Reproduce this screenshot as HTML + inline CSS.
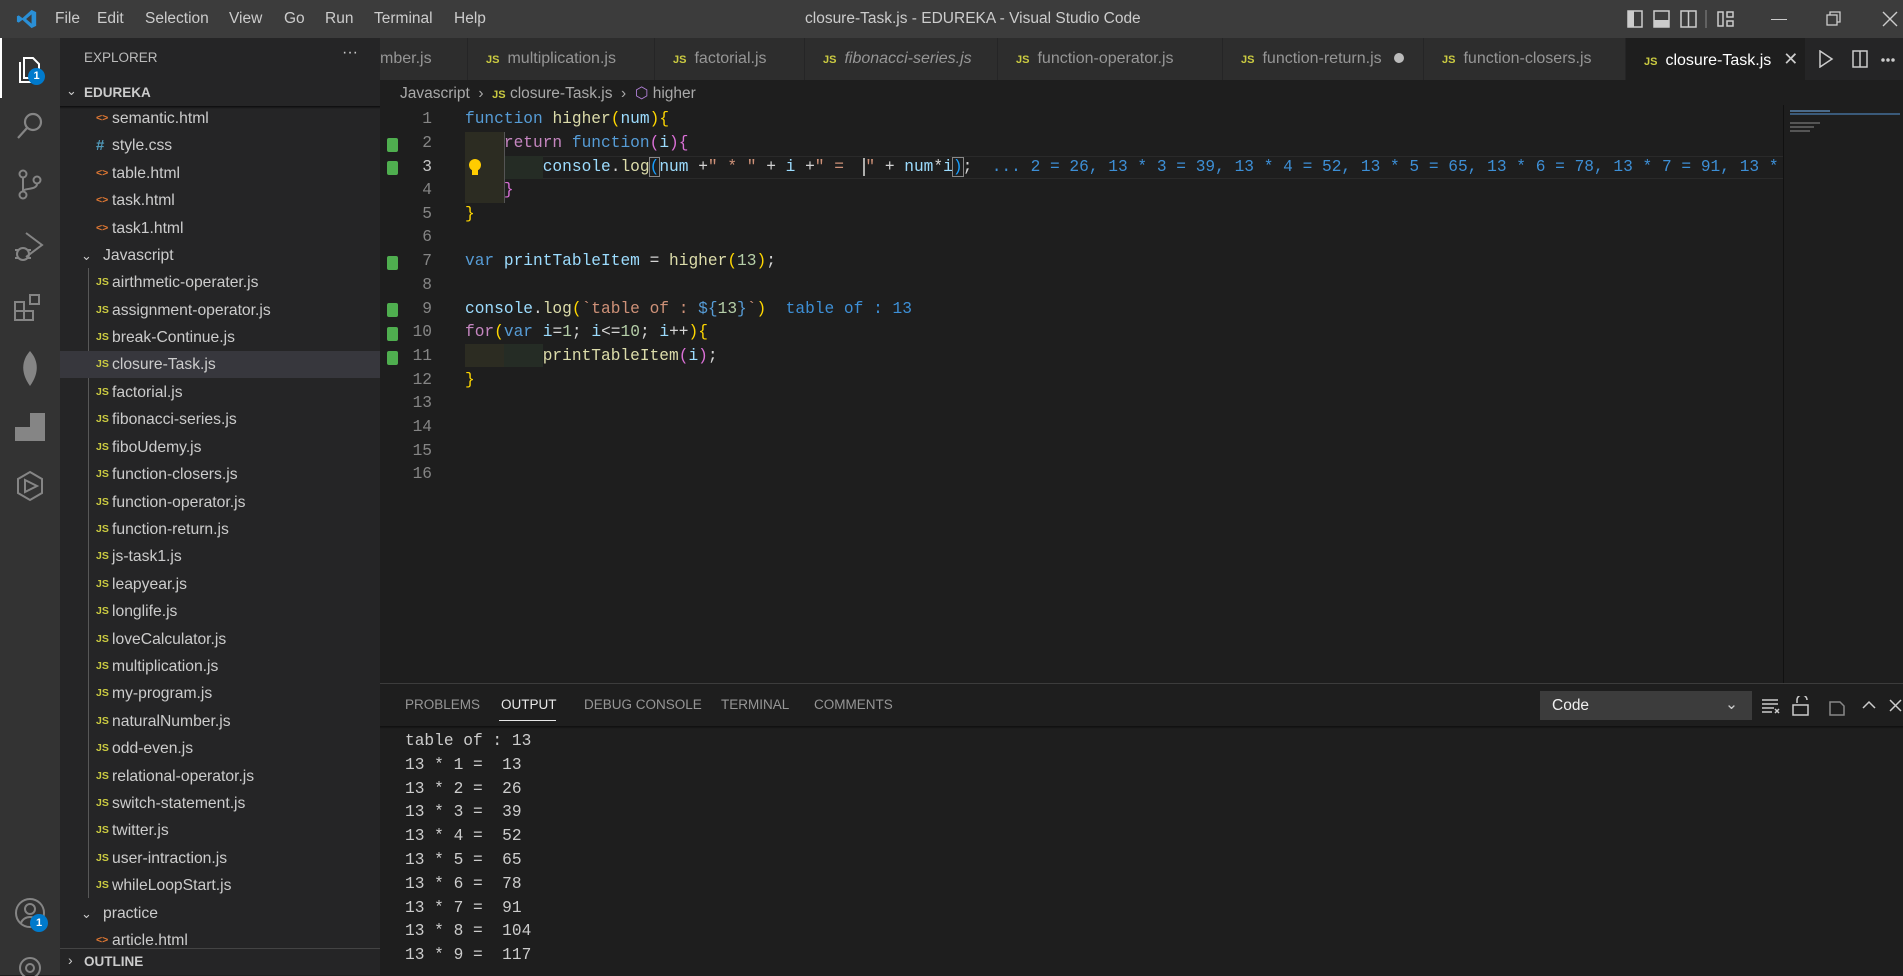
<!DOCTYPE html>
<html><head><meta charset="utf-8"><style>
*{margin:0;padding:0;box-sizing:border-box}
body{width:1903px;height:975px;background:#1e1e1e;position:relative;overflow:hidden;font-family:"Liberation Sans",sans-serif;color:#ccc}
.a{position:absolute}
#title{left:0;top:0;width:1903px;height:38px;background:#3c3c3c}
.menu{top:10px;font-size:15.5px;color:#ccc}
#act{left:0;top:38px;width:60px;height:937px;background:#333}
#side{left:60px;top:38px;width:320px;height:937px;background:#252526}
.row{position:absolute;left:60px;width:320px;height:27px;line-height:27px;font-size:15.7px;color:#ccc;white-space:nowrap}
.row .ic{position:absolute;left:36px;font-size:10.5px;font-weight:bold}
.row .t{position:absolute;left:52px}
.js{color:#cbcb41}
.ht{color:#e37933}
.mono{font-family:"Liberation Mono",monospace;font-size:16.2px;white-space:pre}
#tabs{left:380px;top:38px;width:1523px;height:42px;background:#252526}
.tab{position:absolute;top:38px;height:42px;background:#2d2d2d;border-right:1px solid #252526;font-size:16px;color:#969696;line-height:42px;white-space:nowrap;overflow:hidden}
.tab b{color:#cbcb41;font-size:11px;margin-right:8px;margin-left:18px}
.ln{position:absolute;left:380px;width:52px;text-align:right;font-family:"Liberation Mono",monospace;font-size:16.2px;color:#858585;height:23.7px;line-height:23.7px}
.cl{position:absolute;left:465px;height:23.7px;line-height:23.7px}
.gm{position:absolute;left:387px;width:11px;height:14px;background:#4fae4f;border-radius:2px}
.kw{color:#569cd6}.fn{color:#dcdcaa}.vr{color:#9cdcfe}.p1{color:#ffd700}.p2{color:#da70d6}.p3{color:#179fff}.st{color:#ce9178}.nu{color:#b5cea8}.rt{color:#c586c0}.tx{color:#d4d4d4}.hint{color:#3d8fd6}
.ptab{position:absolute;top:697px;font-size:13.5px;color:#969696}
.out{position:absolute;left:405px;font-family:"Liberation Mono",monospace;font-size:16.2px;color:#ccc;white-space:pre;height:23.8px;line-height:23.8px}
</style></head><body>
<div id="title" class="a"></div>
<svg class="a" style="left:15px;top:8px" width="24" height="22" viewBox="0 0 24 24"><path d="M17 2 L22 4.5 V19.5 L17 22 L7 13 L3 16 L1 15 V9 L3 8 L7 11 Z M17 7 L11 12 L17 17 Z" fill="#2a8fd6"/></svg>
<div class="a menu" style="left:55px">File</div>
<div class="a menu" style="left:97px">Edit</div>
<div class="a menu" style="left:145px">Selection</div>
<div class="a menu" style="left:229px">View</div>
<div class="a menu" style="left:284px">Go</div>
<div class="a menu" style="left:325px">Run</div>
<div class="a menu" style="left:374px">Terminal</div>
<div class="a menu" style="left:454px">Help</div>
<div class="a menu" style="left:805px;color:#ccc">closure-Task.js - EDUREKA - Visual Studio Code</div>
<svg class="a" style="left:1626px;top:10px" width="120" height="18"><rect x="2" y="1" width="14" height="16" fill="none" stroke="#ccc" stroke-width="1.5"/><rect x="2" y="1" width="6" height="16" fill="#ccc"/><rect x="28" y="1" width="15" height="16" fill="none" stroke="#ccc" stroke-width="1.5"/><rect x="28" y="10" width="15" height="7" fill="#ccc"/><rect x="55" y="1" width="15" height="16" fill="none" stroke="#ccc" stroke-width="1.5"/><line x1="62.5" y1="1" x2="62.5" y2="17" stroke="#ccc" stroke-width="1.5"/><line x1="80" y1="0" x2="80" y2="18" stroke="#888"/><rect x="92" y="2" width="5" height="14" fill="none" stroke="#ccc" stroke-width="1.5"/><rect x="101" y="2" width="6" height="5" fill="none" stroke="#ccc" stroke-width="1.5"/><rect x="101" y="11" width="6" height="5" fill="none" stroke="#ccc" stroke-width="1.5"/></svg>
<div class="a" style="left:1771px;top:19px;width:16px;height:1px;background:#ccc"></div>
<svg class="a" style="left:1826px;top:11px" width="16" height="16"><rect x="1" y="4" width="10" height="10" fill="none" stroke="#ccc" stroke-width="1.3"/><path d="M4 4 V1 H14 V11 H11" fill="none" stroke="#ccc" stroke-width="1.3"/></svg>
<svg class="a" style="left:1882px;top:11px" width="16" height="16"><path d="M1 1 L15 15 M15 1 L1 15" stroke="#ccc" stroke-width="1.4"/></svg>

<div id="act" class="a"></div>
<div class="a" style="left:0;top:38px;width:2px;height:60px;background:#fff"></div>
<svg class="a" style="left:14px;top:52px" width="32" height="32" viewBox="0 0 32 32" fill="none" stroke="#fff" stroke-width="2"><path d="M10 6 H19 L25 12 V26 H10 Z"/><path d="M6 10 V30 H21"/></svg>
<div class="a" style="left:28px;top:68px;width:17px;height:17px;border-radius:50%;background:#007acc;color:#fff;font-size:11px;text-align:center;line-height:17px;font-weight:bold">1</div>
<svg class="a" style="left:14px;top:110px" width="32" height="32" fill="none" stroke="#858585" stroke-width="2.2"><circle cx="19" cy="12" r="8"/><path d="M13 18 L4 28"/></svg>
<svg class="a" style="left:14px;top:168px" width="32" height="32" fill="none" stroke="#858585" stroke-width="2"><circle cx="9" cy="6" r="3.5"/><circle cx="9" cy="27" r="3.5"/><circle cx="23" cy="12" r="3.5"/><path d="M9 10 V23 M23 16 C23 22 10 20 9 23"/></svg>
<svg class="a" style="left:12px;top:230px" width="34" height="34" fill="none" stroke="#858585" stroke-width="2"><path d="M14 3 L30 15 L14 27"/><circle cx="11" cy="24" r="6"/><path d="M3 20 H7 M3 28 H7 M15 20 H19 M15 28 H19"/></svg>
<svg class="a" style="left:13px;top:292px" width="32" height="32" fill="none" stroke="#858585" stroke-width="2"><rect x="2" y="10" width="9" height="9"/><rect x="2" y="19" width="9" height="9"/><rect x="11" y="19" width="9" height="9"/><rect x="17" y="3" width="9" height="9"/></svg>
<svg class="a" style="left:18px;top:350px" width="24" height="38"><path d="M12 1 C20 10 22 22 12 36 C2 22 4 10 12 1 Z" fill="#858585"/></svg>
<svg class="a" style="left:14px;top:412px" width="32" height="30"><path d="M1 15 H16 V1 H31 V29 H1 Z" fill="#858585"/></svg>
<svg class="a" style="left:15px;top:470px" width="30" height="32" fill="none" stroke="#858585" stroke-width="2"><path d="M15 2 L27 9 V23 L15 30 L3 23 V9 Z"/><path d="M10 10 L22 16 L10 22 Z"/></svg>
<svg class="a" style="left:14px;top:897px" width="32" height="32" fill="none" stroke="#858585" stroke-width="2"><circle cx="16" cy="16" r="14"/><circle cx="16" cy="12" r="5"/><path d="M7 26 C10 18 22 18 25 26"/></svg>
<div class="a" style="left:30px;top:914px;width:18px;height:18px;border-radius:50%;background:#007acc;color:#fff;font-size:11px;text-align:center;line-height:18px;font-weight:bold">1</div>
<svg class="a" style="left:14px;top:952px" width="32" height="24" fill="none" stroke="#858585" stroke-width="2"><circle cx="16" cy="16" r="10"/><circle cx="16" cy="16" r="4"/></svg>

<div id="side" class="a"></div>
<div class="a" style="left:84px;top:50px;font-size:13.5px;color:#bbb">EXPLORER</div>
<div class="a" style="left:342px;top:44px;font-size:16px;color:#ccc">···</div>
<div class="a" style="left:66px;top:83px;font-size:13px;color:#ccc">&#8964;</div>
<div class="a" style="left:84px;top:85px;font-size:13.5px;font-weight:bold;color:#ccc">EDUREKA</div>
<div class="a" style="left:60px;top:106px;width:320px;height:3px;background:linear-gradient(#000a,#0000)"></div>
<div class="a" style="left:88px;top:268px;width:1px;height:630px;background:#585858"></div>

<div class="row" style="top:105px"><span class="ic ht">&lt;&gt;</span><span class="t">semantic.html</span></div>
<div class="row" style="top:132px"><span class="ic" style="color:#519aba;font-size:15px">#</span><span class="t">style.css</span></div>
<div class="row" style="top:160px"><span class="ic ht">&lt;&gt;</span><span class="t">table.html</span></div>
<div class="row" style="top:187px"><span class="ic ht">&lt;&gt;</span><span class="t">task.html</span></div>
<div class="row" style="top:215px"><span class="ic ht">&lt;&gt;</span><span class="t">task1.html</span></div>
<div class="row" style="top:242px"><span class="ic" style="left:21px;color:#ccc;font-weight:normal;font-size:13px">&#8964;</span><span class="t" style="left:43px">Javascript</span></div>
<div class="row" style="top:269px"><span class="ic js">JS</span><span class="t">airthmetic-operater.js</span></div>
<div class="row" style="top:297px"><span class="ic js">JS</span><span class="t">assignment-operator.js</span></div>
<div class="row" style="top:324px"><span class="ic js">JS</span><span class="t">break-Continue.js</span></div>
<div class="row" style="top:351px;background:#37373d"><span class="ic js">JS</span><span class="t">closure-Task.js</span></div>
<div class="row" style="top:379px"><span class="ic js">JS</span><span class="t">factorial.js</span></div>
<div class="row" style="top:406px"><span class="ic js">JS</span><span class="t">fibonacci-series.js</span></div>
<div class="row" style="top:434px"><span class="ic js">JS</span><span class="t">fiboUdemy.js</span></div>
<div class="row" style="top:461px"><span class="ic js">JS</span><span class="t">function-closers.js</span></div>
<div class="row" style="top:489px"><span class="ic js">JS</span><span class="t">function-operator.js</span></div>
<div class="row" style="top:516px"><span class="ic js">JS</span><span class="t">function-return.js</span></div>
<div class="row" style="top:543px"><span class="ic js">JS</span><span class="t">js-task1.js</span></div>
<div class="row" style="top:571px"><span class="ic js">JS</span><span class="t">leapyear.js</span></div>
<div class="row" style="top:598px"><span class="ic js">JS</span><span class="t">longlife.js</span></div>
<div class="row" style="top:626px"><span class="ic js">JS</span><span class="t">loveCalculator.js</span></div>
<div class="row" style="top:653px"><span class="ic js">JS</span><span class="t">multiplication.js</span></div>
<div class="row" style="top:680px"><span class="ic js">JS</span><span class="t">my-program.js</span></div>
<div class="row" style="top:708px"><span class="ic js">JS</span><span class="t">naturalNumber.js</span></div>
<div class="row" style="top:735px"><span class="ic js">JS</span><span class="t">odd-even.js</span></div>
<div class="row" style="top:763px"><span class="ic js">JS</span><span class="t">relational-operator.js</span></div>
<div class="row" style="top:790px"><span class="ic js">JS</span><span class="t">switch-statement.js</span></div>
<div class="row" style="top:817px"><span class="ic js">JS</span><span class="t">twitter.js</span></div>
<div class="row" style="top:845px"><span class="ic js">JS</span><span class="t">user-intraction.js</span></div>
<div class="row" style="top:872px"><span class="ic js">JS</span><span class="t">whileLoopStart.js</span></div>
<div class="row" style="top:900px"><span class="ic" style="left:21px;color:#ccc;font-weight:normal;font-size:13px">&#8964;</span><span class="t" style="left:43px">practice</span></div>
<div class="row" style="top:927px;height:21px;overflow:hidden"><span class="ic ht">&lt;&gt;</span><span class="t">article.html</span></div>
<div class="a" style="left:60px;top:948px;width:320px;height:27px;background:#252526;border-top:1px solid #444"></div>
<div class="a" style="left:68px;top:952px;font-size:14px;color:#ccc">&#8250;</div>
<div class="a" style="left:84px;top:954px;font-size:13.5px;font-weight:bold;color:#ccc">OUTLINE</div>

<div id="tabs" class="a"></div>
<div class="tab" style="left:380px;width:88px"><span style="position:absolute;left:0">mber.js</span></div>
<div class="tab" style="left:468px;width:187px"><b>JS</b>multiplication.js</div>
<div class="tab" style="left:655px;width:150px"><b>JS</b>factorial.js</div>
<div class="tab" style="left:805px;width:193px"><b>JS</b><i>fibonacci-series.js</i></div>
<div class="tab" style="left:998px;width:225px"><b>JS</b>function-operator.js</div>
<div class="tab" style="left:1223px;width:201px"><b>JS</b>function-return.js <span style="display:inline-block;width:10px;height:10px;border-radius:50%;background:#bbb;margin-left:8px"></span></div>
<div class="tab" style="left:1424px;width:202px"><b>JS</b>function-closers.js</div>
<div class="tab" style="left:1626px;width:180px;background:#1e1e1e;color:#fff"><b>JS</b>closure-Task.js<span style="margin-left:12px;color:#ccc;font-size:18px">&#10005;</span></div>
<svg class="a" style="left:1817px;top:50px" width="80" height="18" fill="none" stroke="#ccc" stroke-width="1.5"><path d="M3 1 L15 9 L3 17 Z"/><rect x="36" y="1" width="14" height="16"/><line x1="43" y1="1" x2="43" y2="17"/><circle cx="66" cy="10" r="1" fill="#ccc"/><circle cx="71" cy="10" r="1" fill="#ccc"/><circle cx="76" cy="10" r="1" fill="#ccc"/></svg>

<div class="a" style="left:400px;top:84px;font-size:15.5px;color:#a9a9a9;white-space:nowrap">Javascript &nbsp;&#8250;&nbsp; <span style="color:#cbcb41;font-size:11px;font-weight:bold">JS</span> closure-Task.js &nbsp;&#8250;&nbsp; <span style="color:#b180d7">&#11041;</span> higher</div>

<div class="a" style="left:465px;top:132px;width:39px;height:71px;background:#2c2c22"></div>
<div class="a" style="left:504px;top:156px;width:39px;height:23px;background:#252c25"></div>
<div class="a" style="left:465px;top:344px;width:39px;height:23px;background:#2c2c22"></div>
<div class="a" style="left:504px;top:344px;width:39px;height:23px;background:#252c25"></div>
<div class="a" style="left:504px;top:132px;width:1px;height:71px;background:#555"></div>
<div class="a" style="left:543px;top:156px;width:1240px;height:23px;border-top:1px solid #2a2a2a;border-bottom:1px solid #2a2a2a"></div>
<svg class="a" style="left:467px;top:158px" width="16" height="20"><circle cx="8" cy="7" r="6" fill="#ffcc00"/><rect x="5" y="12" width="6" height="5" fill="#ffcc00"/></svg>

<div class="gm" style="top:138px"></div><div class="gm" style="top:161px"></div><div class="gm" style="top:256px"></div><div class="gm" style="top:303px"></div><div class="gm" style="top:327px"></div><div class="gm" style="top:351px"></div>

<div class="ln" style="top:108px">1</div>
<div class="ln" style="top:132px">2</div>
<div class="ln" style="top:156px;color:#c6c6c6">3</div>
<div class="ln" style="top:179px">4</div>
<div class="ln" style="top:203px">5</div>
<div class="ln" style="top:226px">6</div>
<div class="ln" style="top:250px">7</div>
<div class="ln" style="top:274px">8</div>
<div class="ln" style="top:298px">9</div>
<div class="ln" style="top:321px">10</div>
<div class="ln" style="top:345px">11</div>
<div class="ln" style="top:369px">12</div>
<div class="ln" style="top:392px">13</div>
<div class="ln" style="top:416px">14</div>
<div class="ln" style="top:440px">15</div>
<div class="ln" style="top:463px">16</div>

<div class="cl mono" style="top:108px"><span class="kw">function</span> <span class="fn">higher</span><span class="p1">(</span><span class="vr">num</span><span class="p1">){</span></div>
<div class="cl mono" style="top:132px">    <span class="rt">return</span> <span class="kw">function</span><span class="p2">(</span><span class="vr">i</span><span class="p2">){</span></div>
<div class="cl mono" style="top:156px;width:1318px;overflow:hidden">        <span class="vr">console</span><span class="tx">.</span><span class="fn">log</span><span class="p3" style="outline:1px solid #888">(</span><span class="vr">num</span> <span class="tx">+</span><span class="st">" * "</span> <span class="tx">+</span> <span class="vr">i</span> <span class="tx">+</span><span class="st">" =  <span style="border-left:2px solid #aeafad">"</span></span> <span class="tx">+</span> <span class="vr">num</span><span class="tx">*</span><span class="vr">i</span><span class="p3" style="outline:1px solid #888">)</span><span class="tx">;</span>  <span class="hint">... 2 = 26, 13 * 3 = 39, 13 * 4 = 52, 13 * 5 = 65, 13 * 6 = 78, 13 * 7 = 91, 13 * 8 = 104</span></div>
<div class="cl mono" style="top:179px">    <span class="p2">}</span></div>
<div class="cl mono" style="top:203px"><span class="p1">}</span></div>
<div class="cl mono" style="top:250px"><span class="kw">var</span> <span class="vr">printTableItem</span> <span class="tx">=</span> <span class="fn">higher</span><span class="p1">(</span><span class="nu">13</span><span class="p1">)</span><span class="tx">;</span></div>
<div class="cl mono" style="top:298px"><span class="vr">console</span><span class="tx">.</span><span class="fn">log</span><span class="p1">(</span><span class="st">`table of : </span><span class="kw">${</span><span class="nu">13</span><span class="kw">}</span><span class="st">`</span><span class="p1">)</span>  <span class="hint">table of : 13</span></div>
<div class="cl mono" style="top:321px"><span class="rt">for</span><span class="p1">(</span><span class="kw">var</span> <span class="vr">i</span><span class="tx">=</span><span class="nu">1</span><span class="tx">;</span> <span class="vr">i</span><span class="tx">&lt;=</span><span class="nu">10</span><span class="tx">;</span> <span class="vr">i</span><span class="tx">++</span><span class="p1">){</span></div>
<div class="cl mono" style="top:345px">        <span class="fn">printTableItem</span><span class="p2">(</span><span class="vr">i</span><span class="p2">)</span><span class="tx">;</span></div>
<div class="cl mono" style="top:369px"><span class="p1">}</span></div>

<div class="a" style="left:1783px;top:105px;width:1px;height:578px;background:#111"></div>
<div class="a" style="left:1790px;top:110px;width:40px;height:2px;background:#4a6a8a"></div>
<div class="a" style="left:1790px;top:113px;width:110px;height:2px;background:#3a5a7a"></div>
<div class="a" style="left:1790px;top:122px;width:30px;height:2px;background:#555"></div>
<div class="a" style="left:1790px;top:126px;width:24px;height:2px;background:#555"></div>
<div class="a" style="left:1790px;top:130px;width:20px;height:2px;background:#555"></div>

<div class="a" style="left:380px;top:683px;width:1523px;height:292px;background:#1e1e1e;border-top:1px solid #3c3c3c"></div>
<div class="ptab" style="left:405px">PROBLEMS</div>
<div class="ptab" style="left:501px;color:#e7e7e7">OUTPUT</div>
<div class="a" style="left:499px;top:720px;width:57px;height:1px;background:#e7e7e7"></div>
<div class="ptab" style="left:584px">DEBUG CONSOLE</div>
<div class="ptab" style="left:721px">TERMINAL</div>
<div class="ptab" style="left:814px">COMMENTS</div>
<div class="a" style="left:1540px;top:691px;width:212px;height:29px;background:#3c3c3c;color:#f0f0f0;font-size:15.5px;line-height:29px;padding-left:12px">Code<span style="position:absolute;right:14px;top:-1px;color:#ccc">&#8964;</span></div>
<svg class="a" style="left:1760px;top:696px" width="143" height="20" fill="none" stroke="#ccc" stroke-width="1.5"><path d="M2 4 H18 M2 8 H18 M2 12 H14 M2 16 H12 M15 13 L19 17 M19 13 L15 17"/><path d="M37 7 V4 A5 5 0 0 1 47 4"/><rect x="33" y="9" width="15" height="10"/><path d="M70 6 H80 L84 10 V19 H70 Z" stroke="#888"/><path d="M103 12 L109 6 L115 12"/><path d="M130 4 L141 15 M141 4 L130 15"/></svg>
<div class="a" style="left:380px;top:726px;width:1523px;height:3px;background:linear-gradient(#0008,#0000)"></div>

<div class="out" style="top:730px">table of : 13</div>
<div class="out" style="top:754px">13 * 1 =  13</div>
<div class="out" style="top:778px">13 * 2 =  26</div>
<div class="out" style="top:801px">13 * 3 =  39</div>
<div class="out" style="top:825px">13 * 4 =  52</div>
<div class="out" style="top:849px">13 * 5 =  65</div>
<div class="out" style="top:873px">13 * 6 =  78</div>
<div class="out" style="top:897px">13 * 7 =  91</div>
<div class="out" style="top:920px">13 * 8 =  104</div>
<div class="out" style="top:944px">13 * 9 =  117</div>
</body></html>
